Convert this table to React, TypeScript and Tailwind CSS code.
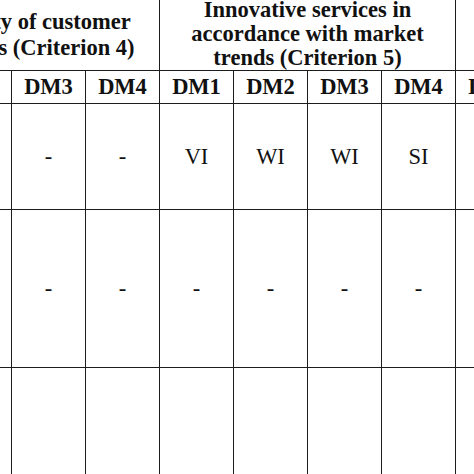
const rows: { h: string; cells: string[] }[] = [
  { h: 'h-[106px]', cells: ['-', '-', '-', '-', 'VI', 'WI', 'WI', 'SI', '-'] },
  { h: 'h-[158px]', cells: ['-', '-', '-', '-', '-', '-', '-', '-', '-'] },
  { h: 'h-[150px]', cells: ['', '', '', '', '', '', '', '', ''] },
];

const dms = ['DM1', 'DM2', 'DM3', 'DM4', 'DM1', 'DM2', 'DM3', 'DM4', 'DM1'];

const cell = 'border border-[#1c1c1c] w-[74px] text-center align-middle p-0';

export default function App() {
  return (
    <div className="w-[474px] h-[474px] overflow-hidden bg-white text-[#111] font-['Liberation_Serif','Times_New_Roman',serif]">
      <table className="table-fixed border-collapse ml-[-137px] mt-[-8px] w-[667px] text-[22.5px]">
        <tbody>
          <tr className="h-[76px] font-bold">
            <td colSpan={4} className="border border-[#1c1c1c] text-center align-top px-0 pt-[16px] leading-[26px]">
              Accessibility of customer
              <br />
              expectations (Criterion 4)
            </td>
            <td colSpan={4} className="border border-[#1c1c1c] text-center align-top px-0 pt-[5px] leading-[24px]">
              Innovative services in
              <br />
              accordance with market
              <br />
              trends (Criterion 5)
            </td>
            <td className={cell}></td>
          </tr>
          <tr className="h-[33px] font-bold leading-none">
            {dms.map((d, i) => (
              <td key={i} className={cell}>
                {d}
              </td>
            ))}
          </tr>
          {rows.map((r, ri) => (
            <tr key={ri} className={r.h}>
              {r.cells.map((c, ci) => (
                <td key={ci} className={cell}>
                  {c}
                </td>
              ))}
            </tr>
          ))}
        </tbody>
      </table>
    </div>
  );
}
